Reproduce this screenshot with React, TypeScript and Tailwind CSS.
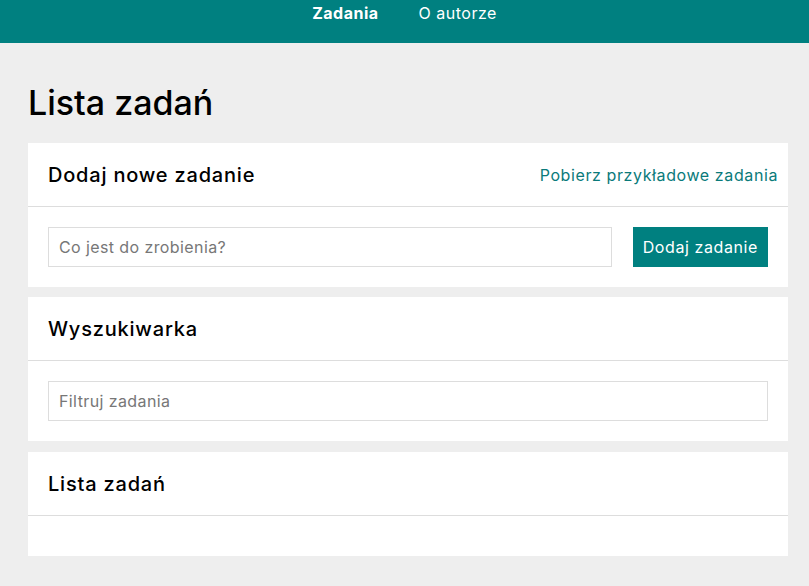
import { useState } from "react";

const App = () => {
  const [task, setTask] = useState("");
  const [filter, setFilter] = useState("");

  return (
    <div className="min-h-screen bg-[#eeeeee] font-['Inter',sans-serif] text-black">
      <nav className="h-[43px] bg-[#008080] flex justify-center gap-10 pt-[1px] text-[16px] tracking-[0.5px] text-white">
        <a className="font-bold">Zadania</a>
        <a>O autorze</a>
      </nav>

      <main className="px-[28px] pr-[21px]">
        <h1 className="mt-[36px] mb-[16px] text-[34px] font-medium leading-[48px]">
          Lista zadań
        </h1>

        <section className="bg-white">
          <div className="h-[64px] px-5 flex items-center justify-between border-b border-[#dddddd]">
            <h2 className="text-[20px] font-medium tracking-[0.8px]">Dodaj nowe zadanie</h2>
            <a className="text-[16px] tracking-[0.6px] text-[#0a7a7a] -mr-[10px]">
              Pobierz przykładowe zadania
            </a>
          </div>
          <div className="p-5 flex gap-[21px]">
            <input
              value={task}
              onChange={(e) => setTask(e.target.value)}
              placeholder="Co jest do zrobienia?"
              className="flex-1 h-10 px-[10px] border border-[#dddddd] text-[16px] tracking-[0.4px] outline-none placeholder:text-[#777777]"
            />
            <button className="h-10 px-[10px] bg-[#008080] text-white text-[16px] tracking-[0.6px]">
              Dodaj zadanie
            </button>
          </div>
        </section>

        <section className="bg-white mt-[10px]">
          <div className="h-[64px] px-5 flex items-center border-b border-[#dddddd]">
            <h2 className="text-[20px] font-medium tracking-[0.8px]">Wyszukiwarka</h2>
          </div>
          <div className="p-5">
            <input
              value={filter}
              onChange={(e) => setFilter(e.target.value)}
              placeholder="Filtruj zadania"
              className="w-full h-10 px-[10px] border border-[#dddddd] text-[16px] tracking-[0.4px] outline-none placeholder:text-[#777777]"
            />
          </div>
        </section>

        <section className="bg-white mt-[11px]">
          <div className="h-[64px] px-5 flex items-center border-b border-[#dddddd]">
            <h2 className="text-[20px] font-medium tracking-[0.8px]">Lista zadań</h2>
          </div>
          <div className="h-10" />
        </section>
      </main>
    </div>
  );
};

export default App;
